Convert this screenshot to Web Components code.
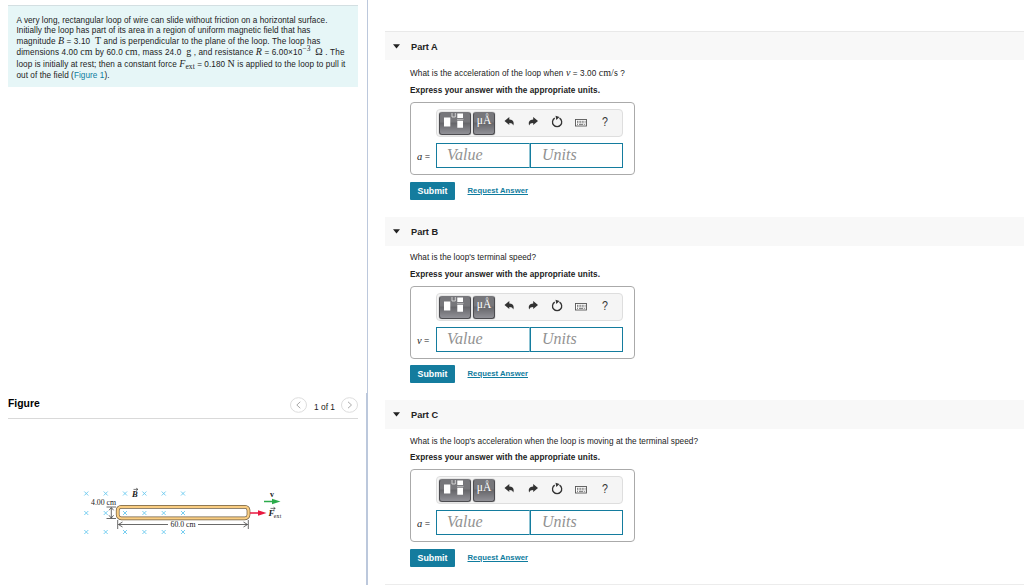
<!DOCTYPE html>
<html lang="en">
<head>
<meta charset="utf-8">
<title>Rectangular loop in a magnetic field</title>
<style>
  body {
    margin: 0;
    height: 585px;
    overflow: hidden;
    background: #ffffff;
    color: #222222;
    font-family: "Liberation Sans", Arial, sans-serif;
    font-size: 8.2px;
  }

  i, .rm {
    font-family: "Liberation Serif", "Times New Roman", serif;
    font-size: 10px;
    line-height: 1px;
  }

  sub, sup {
    font-family: "Liberation Serif", "Times New Roman", serif;
    font-size: 7.5px;
    line-height: 0;
  }

  sub {
    vertical-align: -1.5px;
  }

  a {
    color: #0f7c9e;
    text-decoration: none;
  }
</style>
</head>
<body>
<exercise-page>
  <problem-text slot="side">
    <fit-line width="311" height="11">A very long, rectangular loop of wire can slide without friction on a horizontal surface.</fit-line>
    <fit-line width="294" height="10">Initially the loop has part of its area in a region of uniform magnetic field that has</fit-line>
    <fit-line width="304" height="11">magnitude <i>B</i> = 3.10 &nbsp;<span class="rm">T</span> and is perpendicular to the plane of the loop. The loop has</fit-line>
    <fit-line width="328" height="12">dimensions 4.00 <span class="rm">cm</span> by 60.0 <span class="rm">cm</span>, mass 24.0 &nbsp;<span class="rm">g</span> , and resistance <i>R</i> = 6.00×10<sup>−3</sup> &nbsp;<span class="rm">Ω</span> . The</fit-line>
    <fit-line width="329" height="11">loop is initially at rest; then a constant force <i>F</i><sub>ext</sub> = 0.180 <span class="rm">N</span> is applied to the loop to pull it</fit-line>
    <fit-line width="93" height="11">out of the field (<a>Figure 1</a>).</fit-line>
  </problem-text>
  <figure-panel slot="side"><loop-diagram></loop-diagram></figure-panel>

  <question-part class="first" name="Part A" symbol="a" style="--top: 8px; --gap: 5px; --actions: 7px; --height: 186px">
    <fit-line width="215" height="12">What is the acceleration of the loop when <i>v</i> = 3.00 <span class="rm">cm/s</span> ?</fit-line>
  </question-part>
  <question-part name="Part B" symbol="v" style="--top: 6px; --gap: 5px; --actions: 6px; --height: 183px">
    <fit-line width="126" height="12">What is the loop's terminal speed?</fit-line>
  </question-part>
  <question-part name="Part C" symbol="a" style="--top: 7px; --gap: 4px; --actions: 7px; --height: 184px">
    <fit-line width="288" height="12">What is the loop's acceleration when the loop is moving at the terminal speed?</fit-line>
  </question-part>
</exercise-page>

<script>
class ExercisePage extends HTMLElement {
  constructor() {
    super();
    this.attachShadow({ mode: "open" });
  }

  connectedCallback() {
    this.shadowRoot.innerHTML = `
      <style>
        :host {
          display: grid;
          grid-template-columns: 368px 1fr;
          height: 585px;
        }
        .side {
          display: flex;
          flex-direction: column;
          background: linear-gradient(#bcc8dc, #bcc8dc) 367px 0 / 1px 100% no-repeat,
            linear-gradient(#bcc8dc, #bcc8dc) 366px 393px / 1px 192px no-repeat;
        }
        main {
          padding: 31px 0 0 17px;
        }
        .next {
          height: 1px;
          background: #ececec;
        }
      </style>
      <div class="side"><slot name="side"></slot></div>
      <main><slot></slot><div class="next"></div></main>
    `;
  }
}

// A single line of text, tracked to span exactly the given width.
class FitLine extends HTMLElement {
  constructor() {
    super();
    this.attachShadow({ mode: "open" });
  }

  connectedCallback() {
    const height = this.getAttribute("height") || 12;
    this.shadowRoot.innerHTML = `
      <style>
        :host {
          display: block;
          height: ${height}px;
          line-height: ${height}px;
          white-space: nowrap;
        }
      </style>
      <span><slot></slot></span>
    `;
    const span = this.shadowRoot.querySelector("span");
    const extra = this.getAttribute("width") - span.getBoundingClientRect().width;
    span.style.letterSpacing = `${extra / this.textContent.length}px`;
  }
}

class ProblemText extends HTMLElement {
  constructor() {
    super();
    this.attachShadow({ mode: "open" });
  }

  connectedCallback() {
    this.shadowRoot.innerHTML = `
      <style>
        :host {
          display: block;
          box-sizing: border-box;
          width: 350px;
          height: 82px;
          margin: 5px 0 0 8px;
          padding: 9px 8px 0 8.5px;
          border-top: 1px solid #d3dfe2;
          background: #e6f6f7;
        }
      </style>
      <slot></slot>
    `;
  }
}

class FigurePanel extends HTMLElement {
  constructor() {
    super();
    this.attachShadow({ mode: "open" });
  }

  connectedCallback() {
    this.shadowRoot.innerHTML = `
      <style>
        :host {
          display: block;
          width: 350px;
          margin: 306px 0 0 8px;
        }
        header {
          display: flex;
          align-items: center;
          box-sizing: border-box;
          height: 26px;
          padding-bottom: 1px;
          border-bottom: 1px solid #d9d9d9;
        }
        h2 {
          flex: 1;
          margin: 0 0 2px;
          color: #000000;
          font-size: 10.4px;
          line-height: 14px;
        }
        nav {
          display: flex;
          align-items: center;
        }
        nav span {
          margin: 3px 6px 0 7px;
          font-size: 8.4px;
        }
        svg {
          fill: none;
          stroke: #dddddd;
        }
        svg path {
          stroke: #aaaaaa;
        }
      </style>
      <header>
        <h2>Figure</h2>
        <nav>
          <svg width="17" height="16"><ellipse cx="8.5" cy="8" rx="8" ry="7.3"/><path d="M10.3 4.8L6.8 8l3.5 3.2"/></svg>
          <span>1 of 1</span>
          <svg width="17" height="16"><ellipse cx="8.5" cy="8" rx="8" ry="7.3"/><path d="M7 4.8L10.5 8L7 11.2"/></svg>
        </nav>
      </header>
      <slot></slot>
    `;
  }
}

class LoopDiagram extends HTMLElement {
  constructor() {
    super();
    this.attachShadow({ mode: "open" });
  }

  connectedCallback() {
    // Field pointing into the page
    let field = "";
    for (const y of [493.5, 513, 532]) {
      for (const x of [86.3, 105.7, 125, 144.4, 163.7, 183]) {
        field += `M${x - 2} ${y - 2}l4 4m0 -4l-4 4`;
      }
    }
    this.shadowRoot.innerHTML = `
      <style>
        :host {
          display: block;
          margin: 61px 0 0 62px;
        }
        svg {
          display: block;
        }
        text {
          font-family: "Liberation Serif", "Times New Roman", serif;
          fill: #222222;
        }
      </style>
      <svg width="220" height="65" viewBox="70 480 220 65" fill="none">
        <rect x="117.7" y="506.9" width="130.8" height="11.4" rx="3.5" stroke="#6e5c40" stroke-width="3.7"/>
        <rect x="117.7" y="506.9" width="130.8" height="11.4" rx="3.5" stroke="#f9cd82" stroke-width="2.3"/>
        <path d="${field}" stroke="#68c8ee" stroke-width=".9"/>
        <g stroke="#444444" stroke-width=".8">
          <path d="M106.5 507h9.5M106.5 518.5h9.5M111.3 508v10M109 510.3l2.3-2.8l2.3 2.8M109 515.3l2.3 2.8l2.3-2.8"/>
          <path d="M117.7 520v9M248.3 520v9M118.5 524.5H168M198 524.5h49.5M122.5 522l-4 2.5l4 2.5M243.5 522l4 2.5l-4 2.5"/>
        </g>
        <path d="M250 513h9" stroke="#e8173f" stroke-width="1.5"/>
        <path d="M258 510.2l8.5 2.8l-8.5 2.8z" fill="#e8173f"/>
        <path d="M264 501.5h9" stroke="#2cab4b" stroke-width="1.5"/>
        <path d="M272 498.8l8.5 2.7l-8.5 2.7z" fill="#2cab4b"/>
        <text x="91" y="505" font-size="7.8" textLength="25">4.00 cm</text>
        <text x="170.5" y="527.3" font-size="7.8" textLength="25">60.0 cm</text>
        <text x="132" y="496.7" font-size="8.5" font-weight="bold" font-style="italic">B</text>
        <path d="M133.5 489.4h4M136.2 488.2l1.8 1.2l-1.8 1.2" stroke="#222222" stroke-width=".6"/>
        <text x="270" y="497" font-size="8" font-weight="bold">v</text>
        <text x="268.5" y="516.3" font-size="9" font-weight="bold" font-style="italic">F</text>
        <text x="273.8" y="517.8" font-size="5.8" textLength="7.5">ext</text>
        <path d="M270.5 508.4h4.5M273.5 507.2l1.8 1.2l-1.8 1.2" stroke="#222222" stroke-width=".6"/>
      </svg>
    `;
  }
}

class AnswerToolbar extends HTMLElement {
  constructor() {
    super();
    this.attachShadow({ mode: "open" });
  }

  connectedCallback() {
    this.shadowRoot.innerHTML = `
      <style>
        :host {
          display: flex;
          align-items: center;
          box-sizing: border-box;
          width: 187px;
          height: 28px;
          padding-left: 2px;
          border: 1px solid #dedede;
          border-radius: 4px;
          background: #f5f5f5;
        }
        .key {
          box-sizing: border-box;
          height: 23px;
          border: 1px solid #4c4c50;
          border-top-color: #77777b;
          border-radius: 3px;
          background: linear-gradient(#77777b, #77777b 40%, #67676b 50%, #919197);
          box-shadow: 0 0 1px #555555;
          color: #ffffff;
        }
        .templates {
          width: 32px;
        }
        .units {
          width: 22px;
          margin: 0 2px;
          font: 11.5px/14px "Liberation Serif", serif;
          text-align: center;
        }
        .key svg, .icon {
          display: block;
        }
        .icon {
          width: 24px;
          height: 24px;
          margin-bottom: 2px;
        }
        .help {
          width: 24px;
          margin-bottom: 2px;
          color: #333333;
          font-size: 12.5px;
          line-height: 24px;
          text-align: center;
          transform: scaleX(.85);
        }
      </style>
      <div class="key templates">
        <svg width="30" height="21" fill="#ffffff">
          <path d="M4 4.5h6.3v9H4zM17.3 .5h5.7v4.5h-5.7zM17.3 7.8h5.7v7h-5.7z"/>
          <path d="M12 0v4h3.3v-4" fill="none" stroke="#e4e4e4" stroke-width=".8"/>
          <path d="M17 6.4h6.5" stroke="#dddddd" stroke-width=".6"/>
        </svg>
      </div>
      <div class="key units">μÅ</div>
      <svg class="icon" viewBox="0 0 24 24"><path d="M7.5 11l4.8-4v2.6c3.6.2 5.2 2.2 4 6c-.6-2.1-1.6-2.7-4-2.7v2.2z" fill="#333333"/></svg>
      <svg class="icon" viewBox="0 0 24 24"><path d="M17 11l-4.8-4v2.6c-3.6.2-5.2 2.2-4 6c.6-2.1 1.6-2.7 4-2.7v2.2z" fill="#333333"/></svg>
      <svg class="icon" viewBox="0 0 24 24"><path d="M9.7 8.1A4.6 4.6 0 1 0 14.5 8.1" fill="none" stroke="#333333" stroke-width="1.3"/><path d="M10.5 5.8l4 1.3l-3.2 2.8z" fill="#333333"/></svg>
      <svg class="icon" viewBox="0 0 24 24">
        <rect x="6.5" y="9.5" width="11" height="6.5" fill="#ffffff" stroke="#555555" stroke-width=".9"/>
        <path d="M8 11.3h8.5M8 12.8h8.5" stroke="#555555" stroke-width=".9" stroke-dasharray="1 .6"/>
        <path d="M8 14.4h1m1 0h4.2m1 0h1" stroke="#555555" stroke-width=".8"/>
      </svg>
      <div class="help">?</div>
    `;
  }
}

class QuestionPart extends HTMLElement {
  constructor() {
    super();
    this.attachShadow({ mode: "open" });
  }

  connectedCallback() {
    this.shadowRoot.innerHTML = `
      <style>
        :host {
          display: block;
          height: var(--height);
        }
        header {
          display: flex;
          align-items: center;
          box-sizing: border-box;
          height: 29px;
          padding: 1px 0 0 8px;
          background: #f8f8f8;
        }
        :host(.first) header {
          padding-top: 2px;
          border-top: 1px solid #e9e9e9;
        }
        header svg {
          margin-bottom: 1px;
        }
        h3 {
          margin: 0 0 0 11px;
          font-size: 9.2px;
          line-height: 12px;
        }
        .body {
          padding: var(--top) 0 0 25px;
        }
        .hint {
          margin: var(--gap) 0 5px;
          font-weight: bold;
        }
        .answer {
          box-sizing: border-box;
          width: 225px;
          height: 73px;
          padding: 6px 0 0 25px;
          border: 1px solid #aaaaaa;
          border-radius: 4px;
        }
        .row {
          display: flex;
          align-items: center;
          width: 206px;
          margin: 6px 0 0 -19px;
        }
        .symbol {
          width: 19px;
          padding-top: 2px;
          font: 9.5px/12px "Liberation Serif", serif;
          white-space: nowrap;
        }
        .symbol i {
          font-size: 10.5px;
        }
        input {
          box-sizing: border-box;
          width: 93px;
          height: 25px;
          padding: 0 0 1px 11px;
          border: 1px solid #147c9e;
          border-radius: 0;
          outline: 0;
          background: #ffffff;
          font: italic 16px "Liberation Serif", serif;
        }
        input::placeholder {
          color: #929292;
          opacity: 1;
        }
        input.value {
          width: 94px;
          padding-left: 10px;
          border-right-color: #8dc3d3;
        }
        .actions {
          display: flex;
          align-items: center;
          margin-top: var(--actions);
        }
        button {
          width: 45px;
          height: 18px;
          margin-right: 12.5px;
          padding: 0;
          border: 0;
          border-radius: 1px;
          background: #147c9e;
          color: #ffffff;
          font: bold 8.8px "Liberation Sans", sans-serif;
        }
        a {
          color: #0f7c9e;
          font-size: 7.7px;
          font-weight: bold;
          text-decoration: underline;
        }
      </style>
      <header>
        <svg width="7" height="5"><path d="M0 .2h7L3.5 4.6z" fill="#222222"/></svg>
        <h3>${this.getAttribute("name")}</h3>
      </header>
      <div class="body">
        <slot></slot>
        <fit-line class="hint" width="190" height="12">Express your answer with the appropriate units.</fit-line>
        <div class="answer">
          <answer-toolbar></answer-toolbar>
          <div class="row">
            <span class="symbol"><i>${this.getAttribute("symbol")}</i> =</span>
            <input class="value" placeholder="Value"><input placeholder="Units">
          </div>
        </div>
        <div class="actions">
          <button>Submit</button>
          <a><fit-line width="60.5" height="16">Request Answer</fit-line></a>
        </div>
      </div>
    `;
  }
}

customElements.define("exercise-page", ExercisePage);
customElements.define("problem-text", ProblemText);
customElements.define("figure-panel", FigurePanel);
customElements.define("loop-diagram", LoopDiagram);
customElements.define("answer-toolbar", AnswerToolbar);
customElements.define("question-part", QuestionPart);
customElements.define("fit-line", FitLine);
</script>
</body>
</html>
